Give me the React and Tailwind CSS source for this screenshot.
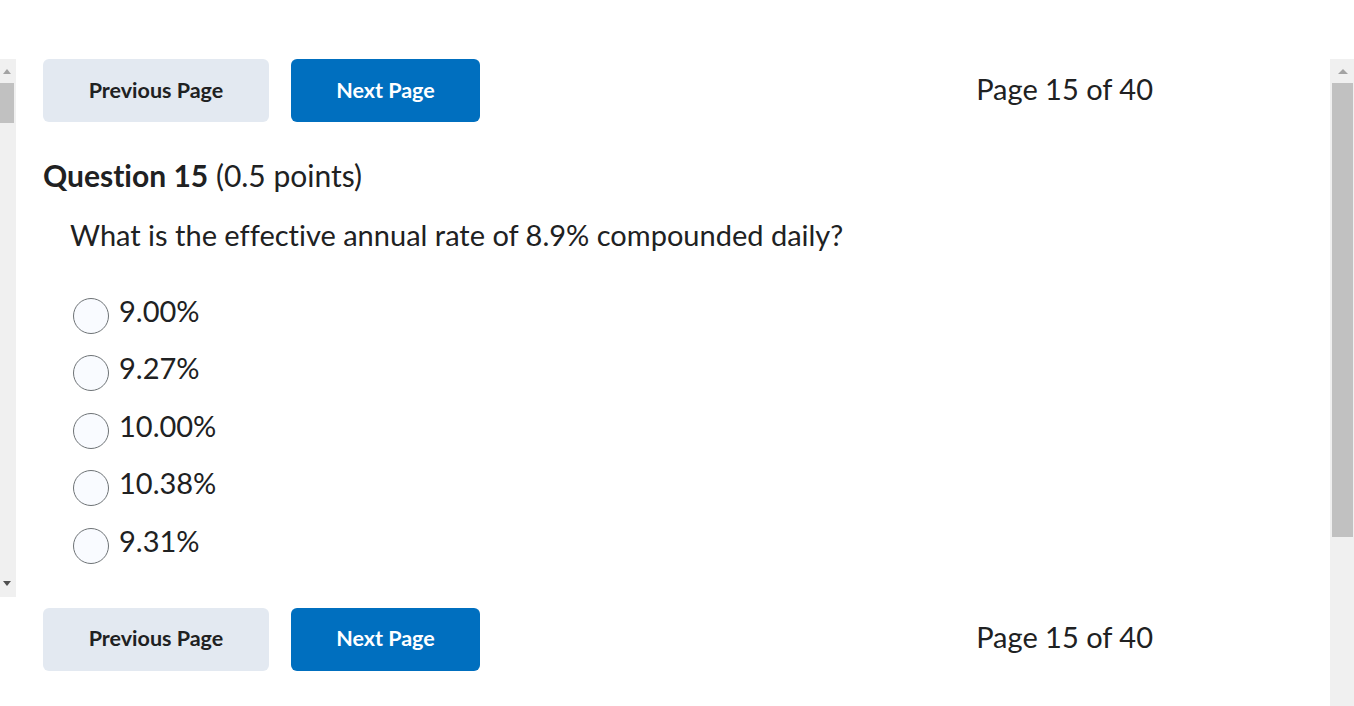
import React from "react";

const options = ["9.00%", "9.27%", "10.00%", "10.38%", "9.31%"];

function Pager() {
  return (
    <div className="flex h-[63px] items-center pr-[177px]">
      <button className="h-[63px] w-[226px] rounded-md bg-[#e3e9f1] pb-px text-[21.5px] font-bold text-[#202122]">
        Previous Page
      </button>
      <button className="ml-[22px] h-[63px] w-[189px] rounded-md bg-[#006fbf] pb-px text-[21.5px] font-bold text-white">
        Next Page
      </button>
      <div className="mb-[4px] ml-auto text-[29px] leading-[32px] text-[#202122]">Page 15 of 40</div>
    </div>
  );
}

export default function App() {
  return (
    <div className="flex h-[706px] w-[1354px] overflow-hidden bg-white font-['Lato',sans-serif] text-[#202122] [font-variant-ligatures:none]">
      {/* left scrollbar */}
      <div className="mt-[59px] flex h-[538px] w-4 flex-col bg-[#f0f0f0]">
        <div className="flex h-6 items-center justify-center pr-[2px]">
          <div className="h-0 w-0 border-x-[4px] border-b-[5px] border-x-transparent border-b-[#a3a3a3]" />
        </div>
        <div className="h-10 w-[14px] bg-[#c1c1c1]" />
        <div className="flex-1" />
        <div className="flex h-7 items-center justify-center pr-[2px]">
          <div className="h-0 w-0 border-x-[4px] border-t-[5px] border-x-transparent border-t-[#505050]" />
        </div>
      </div>

      {/* main */}
      <div className="flex-1 pl-[27px] pt-[59px]">
        <Pager />

        <h2 className="mt-[35px] text-[30px] leading-[36px]">
          <span className="font-bold">Question 15</span> (0.5 points)
        </h2>

        <p className="mt-[26px] pl-[27px] text-[29px] leading-[32px]">
          What is the effective annual rate of 8.9% compounded daily?
        </p>

        <div className="mt-[36px] flex flex-col pl-[30px]">
          {options.map((o) => (
            <label key={o} className="flex h-[57.5px] items-center">
              <span className="h-9 w-9 rounded-full border border-[#6e7376] bg-[#f9fbff]" />
              <span className="mb-[10px] ml-[10px] text-[29px] leading-[32px]">{o}</span>
            </label>
          ))}
        </div>

        <div className="mt-[33px]">
          <Pager />
        </div>
      </div>

      {/* right scrollbar */}
      <div className="mt-[59px] flex w-6 flex-col bg-[#f0f0f0] pl-[2px] pr-px">
        <div className="flex h-6 items-center justify-center">
          <div className="h-0 w-0 border-x-[5px] border-b-[5px] border-x-transparent border-b-[#a3a3a3]" />
        </div>
        <div className="h-[454px] bg-[#c1c1c1]" />
      </div>
    </div>
  );
}
